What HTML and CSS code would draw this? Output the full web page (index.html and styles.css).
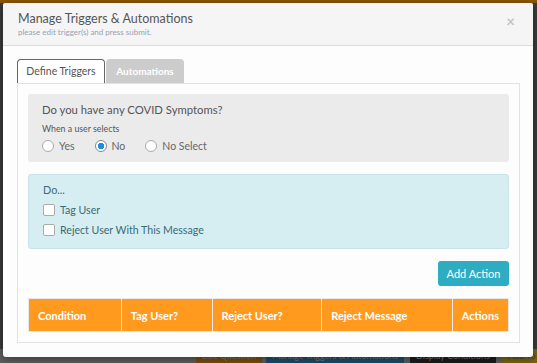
FILE: index.html
```html
<!DOCTYPE html>
<html lang="en">
<head>
    <meta charset="UTF-8">
    <meta name="viewport" content="width=device-width, initial-scale=1.0">
    <title>Manage Triggers & Automations</title>
    <link rel="stylesheet" href="styles.css">
</head>
<body>

    <!-- dimmed page behind the modal -->
    <div class="backdrop">
        <div class="page-top"></div>
        <div class="page-middle"></div>
        <div class="page-buttons">
            <span class="bg-btn bg-edit">Edit Question</span>
            <span class="bg-btn bg-manage">Manage Triggers &amp; Automations</span>
            <span class="bg-btn bg-display">Display Conditions</span>
            <span class="bg-btn bg-add">Add To</span>
        </div>
    </div>

    <div class="modal">
        <div class="modal-header">
            <div>
                <h4 class="modal-title">Manage Triggers &amp; Automations</h4>
                <p class="modal-subtitle">please edit trigger(s) and press submit.</p>
            </div>
            <span class="close">&times;</span>
        </div>

        <div class="modal-body">
            <ul class="tabs">
                <li class="tab active">Define Triggers</li>
                <li class="tab">Automations</li>
            </ul>

            <div class="tab-panel">
                <div class="question-box">
                    <h5 class="question">Do you have any COVID Symptoms?</h5>
                    <div class="hint">When a user selects</div>
                    <div class="radios">
                        <label class="radio"><span class="dot"></span>Yes</label>
                        <label class="radio"><span class="dot checked"></span>No</label>
                        <label class="radio"><span class="dot"></span>No Select</label>
                    </div>
                </div>

                <div class="do-box">
                    <div class="do-title">Do...</div>
                    <label class="check"><span class="box"></span>Tag User</label>
                    <label class="check"><span class="box"></span>Reject User With This Message</label>
                </div>

                <div class="actions-row">
                    <button class="add-action">Add Action</button>
                </div>

                <table class="trigger-table">
                    <tr>
                        <th class="col-cond">Condition</th>
                        <th class="col-tag">Tag User?</th>
                        <th class="col-reject">Reject User?</th>
                        <th class="col-msg">Reject Message</th>
                        <th class="col-act">Actions</th>
                    </tr>
                </table>
            </div>
        </div>
    </div>

</body>
</html>
```

FILE: styles.css
```css
body {
    margin: 0;
    padding: 0;
    width: 537px;
    height: 363px;
    overflow: hidden;
    font-family: 'Lato', 'Open Sans', sans-serif;
    background: #5e5e5e;
}

/* page behind */
.backdrop {
    display: flex;
    flex-direction: column;
    height: 363px;
}

.page-top {
    height: 3px;
    background: #8c5600;
}

.page-middle {
    flex: 1;
    background: linear-gradient(to right, #3a3a3a 0, #3a3a3a 3px, #5e5e5e 3px, #5e5e5e 533px, #3b3b3b 533px);
}

.page-buttons {
    height: 14px;
    display: flex;
    padding-left: 196px;
    background: #5e5e5e;
    margin-top: -8px;
    overflow: hidden;
}

.bg-btn {
    font-size: 9px;
    line-height: 14px;
    padding: 0 6px;
    color: #777;
    white-space: nowrap;
    overflow: hidden;
    box-sizing: border-box;
}

.bg-edit { background: #7a4c0c; width: 66px; }
.bg-manage { background: #1d4c6a; width: 138px; margin-left: 4px; }
.bg-display { background: #1c1c1c; width: 86px; margin-left: 6px; }
.bg-add { background: #7a6410; color: #444; width: 35px; margin-left: 6px; }

/* modal */
.modal {
    position: absolute;
    left: 3px;
    top: 3px;
    width: 530px;
    height: 354px;
    background: #fdfdfd;
    border-radius: 3px;
    box-shadow: 0 2px 8px rgba(0, 0, 0, 0.4);
    overflow: hidden;
}

.modal-header {
    display: flex;
    justify-content: space-between;
    align-items: flex-start;
    height: 42px;
    padding: 0 15px;
    background: #f5f5f5;
    border-bottom: 1px solid #dcdcdc;
}

.modal-title {
    margin: 8px 0 0;
    font-size: 12.5px;
    font-weight: normal;
    color: #555;
}

.modal-subtitle {
    margin: 1px 0 0;
    font-size: 8px;
    color: #9a9fb4;
}

.close {
    margin-top: 11px;
    margin-right: 3px;
    font-size: 15px;
    line-height: 15px;
    font-weight: bold;
    color: #c4c4c4;
}

.modal-body {
    padding: 13px 12px 0 14px;
}

/* tabs */
.tabs {
    display: flex;
    list-style: none;
    margin: 0;
    padding: 0;
    gap: 1px;
}

.tab {
    height: 24px;
    width: 78px;
    box-sizing: border-box;
    padding: 0;
    font-size: 10px;
    line-height: 24px;
    text-align: center;
    white-space: nowrap;
    border-radius: 4px 4px 0 0;
    background: #cccccc;
    color: #fff;
    font-weight: bold;
}

.tab.active {
    background: #fff;
    color: #555;
    font-weight: normal;
    font-size: 10.5px;
    border: 1px solid #666;
    border-bottom: none;
    line-height: 23px;
    width: 88px;
}

.tab-panel {
    border: 1px solid #e2e2e2;
    padding: 10px;
    width: 481px;
}

/* question */
.question-box {
    background: #ebebeb;
    border-radius: 3px;
    height: 68px;
    box-sizing: border-box;
    padding: 8px 14px;
}

.question {
    margin: 0;
    font-size: 11.3px;
    font-weight: normal;
    color: #555;
    line-height: 16px;
}

.hint {
    margin-top: 5px;
    font-size: 8.8px;
    color: #555;
    line-height: 11px;
}

.radios {
    display: flex;
    gap: 20px;
    margin-top: 4px;
}

.radio {
    display: flex;
    align-items: center;
    gap: 5px;
    font-size: 10.5px;
    color: #666;
    line-height: 16px;
}

.dot {
    width: 12px;
    height: 12px;
    box-sizing: border-box;
    border: 1px solid #aaa;
    border-radius: 50%;
    background: #fff;
}

.dot.checked {
    border-color: #888;
    background: radial-gradient(circle, #1a8fe0 0, #1a8fe0 3px, #fff 3.5px);
}

/* do box */
.do-box {
    margin-top: 12px;
    height: 75px;
    box-sizing: border-box;
    padding: 8px 14px;
    background: #d6edf1;
    border: 1px solid #c6e4ea;
    border-radius: 3px;
    color: #3b6b77;
}

.do-title {
    font-size: 10.8px;
    line-height: 14px;
}

.check {
    display: flex;
    align-items: center;
    gap: 5px;
    margin-top: 6px;
    font-size: 10.6px;
    line-height: 14px;
}

.box {
    width: 12px;
    height: 12px;
    box-sizing: border-box;
    border: 1px solid #aaa;
    border-radius: 2px;
    background: #fff;
}

/* actions */
.actions-row {
    display: flex;
    justify-content: flex-end;
    margin-top: 12px;
}

.add-action {
    height: 25px;
    width: 71px;
    padding: 0;
    border: none;
    border-radius: 3px;
    background: #2eacc1;
    color: #fff;
    font-family: inherit;
    font-size: 11px;
}

/* table */
.trigger-table {
    margin-top: 12px;
    width: 481px;
    border-collapse: collapse;
}

.trigger-table th {
    height: 33px;
    box-sizing: border-box;
    padding: 0 9px;
    background: #ff9a1f;
    color: #fff;
    font-size: 11px;
    text-align: left;
    border: 1px solid #e8e8e8;
}

.col-cond { width: 93px; }
.col-tag { width: 91px; }
.col-reject { width: 110px; }
.col-msg { width: 131px; }
.col-act { width: 56px; }
```
